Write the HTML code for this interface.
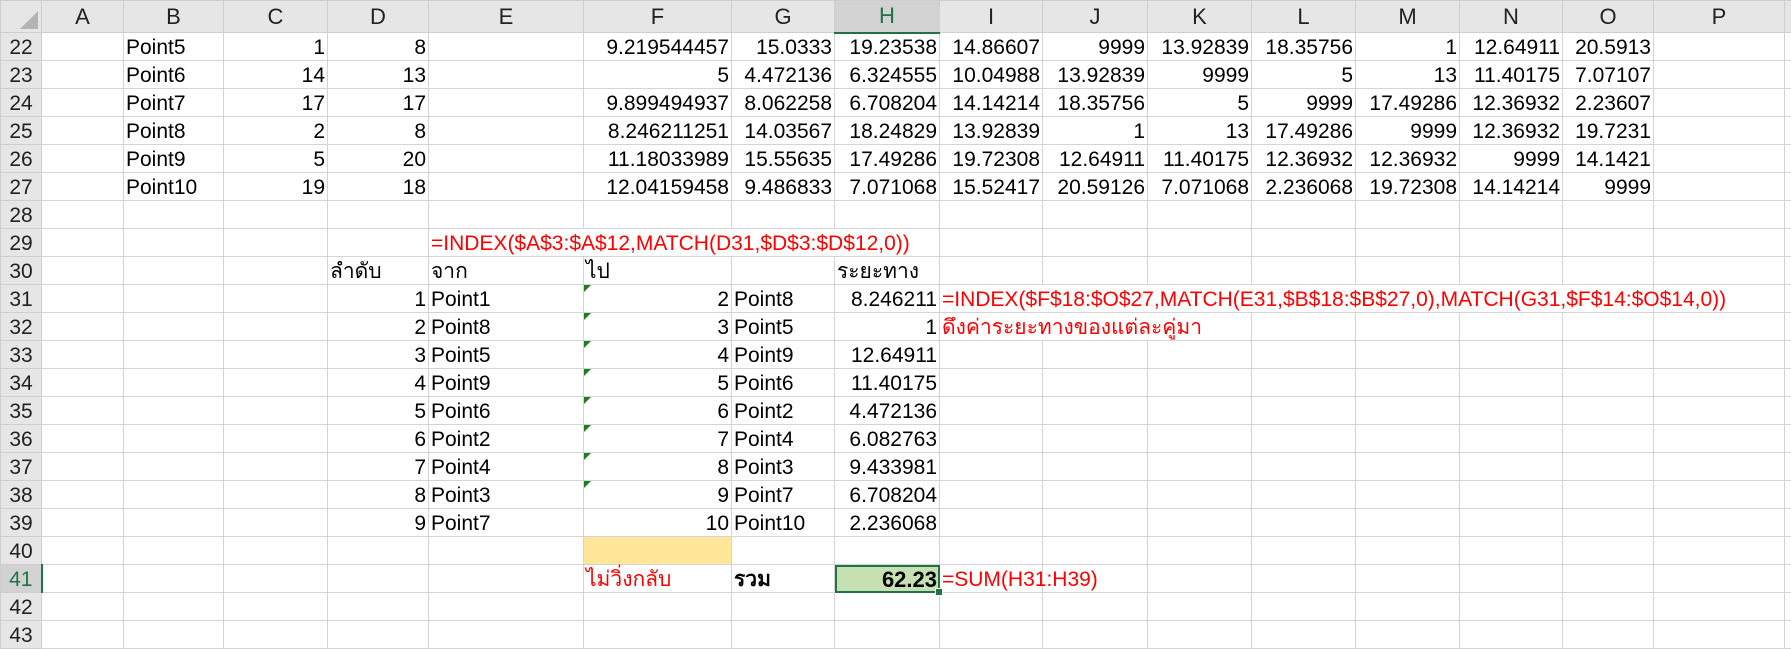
<!DOCTYPE html><html><head><meta charset="utf-8"><style>
body{margin:0;width:1791px;height:625px;overflow:hidden;background:#fff;font-family:Tahoma,"Liberation Sans","Noto Sans CJK SC",sans-serif;font-size:21px;}
table{border-collapse:collapse;table-layout:fixed;position:absolute;left:0;top:0;width:1791px;}
tr{height:28px}
tr.h{height:32px}
td{border:1px solid #d4d4d4;padding:0 2px;white-space:nowrap;overflow:visible;line-height:22px;height:28px;box-sizing:border-box;position:relative;vertical-align:bottom;padding-bottom:1px}
tr.h td{height:32px;background:#e6e6e6;text-align:center;border-color:#cfcfcf;color:#222;vertical-align:middle;padding-bottom:0;font-size:22px}
td.r{text-align:right}
td.rh{background:#e6e6e6;text-align:center;border-color:#cfcfcf;padding-left:0;padding-right:0;color:#222}
.red{color:#f00}
.tri:before{content:"";position:absolute;left:0;top:0;border-top:7px solid #1e7d1e;border-right:7px solid transparent}
</style></head><body>
<table>
<colgroup><col style="width:41px"><col style="width:82px"><col style="width:100px"><col style="width:104px"><col style="width:101px"><col style="width:155px"><col style="width:148px"><col style="width:103px"><col style="width:105px"><col style="width:103px"><col style="width:105px"><col style="width:104px"><col style="width:104px"><col style="width:104px"><col style="width:103px"><col style="width:91px"><col style="width:131px"><col style="width:7px"></colgroup>
<tr class="h"><td style="position:relative"><div style="position:absolute;right:3px;bottom:3px;border-left:18px solid transparent;border-bottom:18px solid #b4b4b4"></div></td><td>A</td><td>B</td><td>C</td><td>D</td><td>E</td><td>F</td><td>G</td><td style="background:#d2d2d2;color:#217346;border-bottom:2px solid #217346">H</td><td>I</td><td>J</td><td>K</td><td>L</td><td>M</td><td>N</td><td>O</td><td>P</td><td></td></tr>
<tr><td class="rh">22</td><td></td><td>Point5</td><td class="r">1</td><td class="r">8</td><td></td><td class="r">9.219544457</td><td class="r">15.0333</td><td class="r">19.23538</td><td class="r">14.86607</td><td class="r">9999</td><td class="r">13.92839</td><td class="r">18.35756</td><td class="r">1</td><td class="r">12.64911</td><td class="r">20.5913</td><td></td><td></td></tr>
<tr><td class="rh">23</td><td></td><td>Point6</td><td class="r">14</td><td class="r">13</td><td></td><td class="r">5</td><td class="r">4.472136</td><td class="r">6.324555</td><td class="r">10.04988</td><td class="r">13.92839</td><td class="r">9999</td><td class="r">5</td><td class="r">13</td><td class="r">11.40175</td><td class="r">7.07107</td><td></td><td></td></tr>
<tr><td class="rh">24</td><td></td><td>Point7</td><td class="r">17</td><td class="r">17</td><td></td><td class="r">9.899494937</td><td class="r">8.062258</td><td class="r">6.708204</td><td class="r">14.14214</td><td class="r">18.35756</td><td class="r">5</td><td class="r">9999</td><td class="r">17.49286</td><td class="r">12.36932</td><td class="r">2.23607</td><td></td><td></td></tr>
<tr><td class="rh">25</td><td></td><td>Point8</td><td class="r">2</td><td class="r">8</td><td></td><td class="r">8.246211251</td><td class="r">14.03567</td><td class="r">18.24829</td><td class="r">13.92839</td><td class="r">1</td><td class="r">13</td><td class="r">17.49286</td><td class="r">9999</td><td class="r">12.36932</td><td class="r">19.7231</td><td></td><td></td></tr>
<tr><td class="rh">26</td><td></td><td>Point9</td><td class="r">5</td><td class="r">20</td><td></td><td class="r">11.18033989</td><td class="r">15.55635</td><td class="r">17.49286</td><td class="r">19.72308</td><td class="r">12.64911</td><td class="r">11.40175</td><td class="r">12.36932</td><td class="r">12.36932</td><td class="r">9999</td><td class="r">14.1421</td><td></td><td></td></tr>
<tr><td class="rh">27</td><td></td><td>Point10</td><td class="r">19</td><td class="r">18</td><td></td><td class="r">12.04159458</td><td class="r">9.486833</td><td class="r">7.071068</td><td class="r">15.52417</td><td class="r">20.59126</td><td class="r">7.071068</td><td class="r">2.236068</td><td class="r">19.72308</td><td class="r">14.14214</td><td class="r">9999</td><td></td><td></td></tr>
<tr><td class="rh">28</td><td></td><td></td><td></td><td></td><td></td><td></td><td></td><td></td><td></td><td></td><td></td><td></td><td></td><td></td><td></td><td></td><td></td></tr>
<tr><td class="rh">29</td><td></td><td></td><td></td><td></td><td class="red" style="border-right-color:transparent">=INDEX($A$3:$A$12,MATCH(D31,$D$3:$D$12,0))</td><td style="border-right-color:transparent"></td><td style="border-right-color:transparent"></td><td></td><td></td><td></td><td></td><td></td><td></td><td></td><td></td><td></td><td></td></tr>
<tr><td class="rh">30</td><td></td><td></td><td></td><td>ลำดับ</td><td>จาก</td><td>ไป</td><td></td><td>ระยะทาง</td><td></td><td></td><td></td><td></td><td></td><td></td><td></td><td></td><td></td></tr>
<tr><td class="rh">31</td><td></td><td></td><td></td><td class="r">1</td><td>Point1</td><td class="r tri">2</td><td>Point8</td><td class="r">8.246211</td><td class="red" style="border-right-color:transparent">=INDEX($F$18:$O$27,MATCH(E31,$B$18:$B$27,0),MATCH(G31,$F$14:$O$14,0))</td><td style="border-right-color:transparent"></td><td style="border-right-color:transparent"></td><td style="border-right-color:transparent"></td><td style="border-right-color:transparent"></td><td style="border-right-color:transparent"></td><td></td><td></td><td></td></tr>
<tr><td class="rh">32</td><td></td><td></td><td></td><td class="r">2</td><td>Point8</td><td class="r tri">3</td><td>Point5</td><td class="r">1</td><td class="red" style="border-right-color:transparent">ดึงค่าระยะทางของแต่ละคู่มา</td><td style="border-right-color:transparent"></td><td></td><td></td><td></td><td></td><td></td><td></td><td></td></tr>
<tr><td class="rh">33</td><td></td><td></td><td></td><td class="r">3</td><td>Point5</td><td class="r tri">4</td><td>Point9</td><td class="r">12.64911</td><td></td><td></td><td></td><td></td><td></td><td></td><td></td><td></td><td></td></tr>
<tr><td class="rh">34</td><td></td><td></td><td></td><td class="r">4</td><td>Point9</td><td class="r tri">5</td><td>Point6</td><td class="r">11.40175</td><td></td><td></td><td></td><td></td><td></td><td></td><td></td><td></td><td></td></tr>
<tr><td class="rh">35</td><td></td><td></td><td></td><td class="r">5</td><td>Point6</td><td class="r tri">6</td><td>Point2</td><td class="r">4.472136</td><td></td><td></td><td></td><td></td><td></td><td></td><td></td><td></td><td></td></tr>
<tr><td class="rh">36</td><td></td><td></td><td></td><td class="r">6</td><td>Point2</td><td class="r tri">7</td><td>Point4</td><td class="r">6.082763</td><td></td><td></td><td></td><td></td><td></td><td></td><td></td><td></td><td></td></tr>
<tr><td class="rh">37</td><td></td><td></td><td></td><td class="r">7</td><td>Point4</td><td class="r tri">8</td><td>Point3</td><td class="r">9.433981</td><td></td><td></td><td></td><td></td><td></td><td></td><td></td><td></td><td></td></tr>
<tr><td class="rh">38</td><td></td><td></td><td></td><td class="r">8</td><td>Point3</td><td class="r tri">9</td><td>Point7</td><td class="r">6.708204</td><td></td><td></td><td></td><td></td><td></td><td></td><td></td><td></td><td></td></tr>
<tr><td class="rh">39</td><td></td><td></td><td></td><td class="r">9</td><td>Point7</td><td class="r">10</td><td>Point10</td><td class="r">2.236068</td><td></td><td></td><td></td><td></td><td></td><td></td><td></td><td></td><td></td></tr>
<tr><td class="rh">40</td><td></td><td></td><td></td><td></td><td></td><td style="background:#ffe699"></td><td></td><td></td><td></td><td></td><td></td><td></td><td></td><td></td><td></td><td></td><td></td></tr>
<tr><td class="rh" style="background:#d2d2d2;color:#217346;border-right:2px solid #217346">41</td><td></td><td></td><td></td><td></td><td></td><td class="red">ไม่วิ่งกลับ</td><td style="font-weight:bold">รวม</td><td class="r" style="background:#c6e0b4;font-weight:bold;font-size:22px;outline:2px solid #217346;outline-offset:-2px">62.23<div style="position:absolute;right:-4px;bottom:-4px;width:6px;height:6px;background:#217346;border:1px solid #fff"></div></td><td class="red">=SUM(H31:H39)</td><td></td><td></td><td></td><td></td><td></td><td></td><td></td><td></td></tr>
<tr><td class="rh">42</td><td></td><td></td><td></td><td></td><td></td><td></td><td></td><td></td><td></td><td></td><td></td><td></td><td></td><td></td><td></td><td></td><td></td></tr>
<tr><td class="rh">43</td><td></td><td></td><td></td><td></td><td></td><td></td><td></td><td></td><td></td><td></td><td></td><td></td><td></td><td></td><td></td><td></td><td></td></tr>
</table>
</body></html>
